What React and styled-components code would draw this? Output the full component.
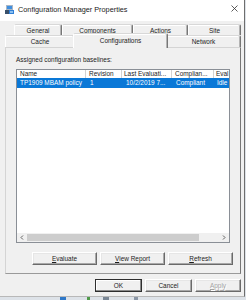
import React from 'react';
import styled, { createGlobalStyle } from 'styled-components';

const Global = createGlobalStyle`
  html, body { margin: 0; padding: 0; }
  body {
    width: 246px;
    height: 300px;
    overflow: hidden;
    background: #dde2e8;
    font-family: "Liberation Sans", Arial, sans-serif;
  }
`;

const Window = styled.div`
  box-sizing: border-box;
  width: 245px;
  height: 297px;
  background: #f0f0f0;
  border-right: 1px solid #6e6e6e;
  border-bottom: 1px solid #b8b8b8;
  display: flex;
  flex-direction: column;
  font-family: "Liberation Sans", Arial, sans-serif;
  font-size: 6.45px;
  color: #1c1c1c;
`;

const TitleBar = styled.div`
  flex: none;
  height: 21px;
  box-sizing: border-box;
  padding: 0 6px 4px 5px;
  background: #ffffff;
  display: flex;
  align-items: center;
`;

const Title = styled.div`
  margin-left: 4px;
  margin-top: 2px;
  font-size: 7.3px;
  color: #1a1a1a;
  white-space: nowrap;
`;

const CloseBox = styled.div`
  margin-left: auto;
  display: flex;
`;

const Body = styled.div`
  flex: none;
  padding: 3px 3px 0 5px;
  display: flex;
  flex-direction: column;
`;

const TabRow = styled.div`
  display: flex;
  height: ${p => p.h}px;
  padding-left: ${p => p.indent}px;
`;

const Tab = styled.div`
  box-sizing: border-box;
  flex: none;
  width: ${p => (p.active ? p.w + 4 : p.w)}px;
  height: ${p => (p.active ? p.h + 3 : p.h)}px;
  margin: ${p => (p.active ? '-2px -2px -1px -2px' : '0')};
  position: ${p => (p.active ? 'relative' : 'static')};
  z-index: ${p => (p.active ? 1 : 'auto')};
  display: flex;
  align-items: center;
  justify-content: center;
  padding-bottom: ${p => (p.active ? 1 : 0)}px;
  background: #f0f0f0;
  border-top: 1px solid #d8d8d8;
  border-left: 1px solid #ffffff;
  border-right: 1px solid #777777;
  border-top-left-radius: 2px;
  border-top-right-radius: 2px;
  box-shadow: inset -1px 0 #b4b4b4, inset 0 1px #ffffff;
  white-space: nowrap;
  color: #1c1c1c;
`;

const Panel = styled.div`
  box-sizing: border-box;
  height: 227px;
  background: #f0f0f0;
  border: 1px solid;
  border-color: #d4d4d4 #777777 #9a9a9a #d4d4d4;
  padding: 7px 10px 8px 10px;
  display: flex;
  flex-direction: column;
`;

const Label = styled.div`
  height: 9px;
  line-height: 9px;
  white-space: nowrap;
`;

const List = styled.div`
  margin-top: 5px;
  height: 174px;
  box-sizing: border-box;
  border: 1px solid #8a8f96;
  background: #ffffff;
  display: flex;
  flex-direction: column;
  overflow: hidden;
`;

const HeaderRow = styled.div`
  flex: none;
  display: flex;
  height: 8px;
`;

const HeaderCell = styled.div`
  box-sizing: border-box;
  flex: none;
  width: ${p => p.w}px;
  padding-left: ${p => p.pad}px;
  line-height: 8px;
  border-right: 1px solid #d2d2d2;
  white-space: nowrap;
  overflow: hidden;
  color: #1c1c1c;
`;

const DataRow = styled.div`
  flex: none;
  display: flex;
  height: 10px;
  background: ${p => (p.selected ? '#0a78d7' : 'transparent')};
  color: ${p => (p.selected ? '#ffffff' : '#1c1c1c')};
`;

const DataCell = styled.div`
  box-sizing: border-box;
  flex: none;
  width: ${p => p.w}px;
  padding-left: ${p => p.pad}px;
  line-height: 10px;
  white-space: nowrap;
  overflow: hidden;
`;

const Rows = styled.div`
  flex: 1;
`;

const HScroll = styled.div`
  flex: none;
  height: 9px;
  display: flex;
  align-items: stretch;
  background: #f0f0f0;
`;

const ScrollArrow = styled.div`
  flex: none;
  width: 10px;
  display: flex;
  align-items: center;
  justify-content: center;
`;

const ScrollTrack = styled.div`
  flex: 1;
  display: flex;
  align-items: stretch;
  padding: 1px 0;
`;

const Thumb = styled.div`
  width: 172px;
  background: #cdcdcd;
`;

const ButtonRow = styled.div`
  display: flex;
  justify-content: flex-end;
  gap: 3px;
  margin: ${p => p.m};
`;

const Button = styled.button`
  box-sizing: border-box;
  flex: none;
  width: ${p => p.w}px;
  height: 13px;
  padding: 0 0 1px 0;
  margin: 0;
  font-family: "Liberation Sans", Arial, sans-serif;
  font-size: 6.45px;
  color: ${p => (p.disabled ? '#a3a3a3' : '#1c1c1c')};
  text-shadow: ${p => (p.disabled ? '1px 1px 0 #ffffff' : 'none')};
  background: #f0f0f0;
  border: 1px solid;
  border-color: ${p => (p.primary ? '#2e2e2e' : '#ffffff #6a6a6a #6a6a6a #ffffff')};
  box-shadow: ${p =>
    p.primary
      ? 'inset -1px -1px #8a8a8a, inset 1px 1px #ffffff'
      : 'inset -1px -1px #a8a8a8, inset 1px 1px #e6e6e6'};
  white-space: nowrap;
  cursor: default;

  u { text-decoration-thickness: 0.5px; text-underline-offset: 1px; }
`;

const Desktop = styled.div`
  height: 3px;
  display: flex;
  align-items: stretch;
  background: #dde2e8;
`;

const Spot = styled.div`
  flex: none;
  width: ${p => p.w}px;
  margin-left: ${p => p.ml}px;
  background: ${p => p.c};
`;

const AppIcon = () => (
  <svg width="9" height="9" viewBox="0 0 9 9" style={{ marginTop: 2 }}>
    <rect x="1" y="0" width="7" height="5" fill="#aab6c4" />
    <rect x="2" y="1" width="5" height="3" fill="#3f8fe0" />
    <rect x="0" y="5" width="4" height="4" fill="#39506a" />
    <rect x="4" y="5" width="5" height="4" fill="#2f7fd6" />
    <rect x="5" y="6" width="3" height="2" fill="#8cc0f0" />
  </svg>
);

const CloseIcon = () => (
  <svg width="7" height="7" viewBox="0 0 7 7">
    <path d="M0.5 0.5 L6.5 6.5 M6.5 0.5 L0.5 6.5" stroke="#333" strokeWidth="0.8" fill="none" />
  </svg>
);

const Chevron = ({ dir }) => (
  <svg width="4" height="5" viewBox="0 0 4 5">
    {dir === 'left' ? (
      <path d="M3 0.5 L1 2.5 L3 4.5" stroke="#606060" strokeWidth="1" fill="none" />
    ) : (
      <path d="M1 0.5 L3 2.5 L1 4.5" stroke="#606060" strokeWidth="1" fill="none" />
    )}
  </svg>
);

const backTabs = [
  { label: 'General', w: 48 },
  { label: 'Components', w: 71 },
  { label: 'Actions', w: 55 },
  { label: 'Site', w: 53 },
];

const frontTabs = [
  { label: 'Cache', w: 70 },
  { label: 'Configurations', w: 91, active: true },
  { label: 'Network', w: 75 },
];

const columns = [
  { title: 'Name', w: 69 },
  { title: 'Revision', w: 36 },
  { title: 'Last Evaluati...', w: 50 },
  { title: 'Complian...', w: 42 },
  { title: 'Evaluation State', w: 60 },
];

const rows = [
  ['TP1909 MBAM policy', '1', '10/2/2019 7...', 'Compliant', 'Idle'],
];

export default function App() {
  return (
    <>
      <Global />
      <Window>
        <TitleBar>
          <AppIcon />
          <Title>Configuration Manager Properties</Title>
          <CloseBox>
            <CloseIcon />
          </CloseBox>
        </TitleBar>
        <Body>
          <TabRow h={11} indent={9}>
            {backTabs.map(t => (
              <Tab key={t.label} w={t.w} h={11}>{t.label}</Tab>
            ))}
          </TabRow>
          <TabRow h={12} indent={0}>
            {frontTabs.map(t => (
              <Tab key={t.label} w={t.w} h={12} active={t.active}>{t.label}</Tab>
            ))}
          </TabRow>
          <Panel>
            <Label>Assigned configuration baselines:</Label>
            <List>
              <HeaderRow>
                {columns.map((c, i) => (
                  <HeaderCell key={c.title} w={c.w} pad={i === 2 || i === 4 ? 2 : 3}>
                    {i === 4 ? 'Eval' : c.title}
                  </HeaderCell>
                ))}
              </HeaderRow>
              <Rows>
                {rows.map((r, ri) => (
                  <DataRow key={ri} selected>
                    {r.map((v, i) => (
                      <DataCell key={i} w={columns[i].w} pad={i === 0 ? 3 : i === 4 ? 3 : 4}>{v}</DataCell>
                    ))}
                  </DataRow>
                ))}
              </Rows>
              <HScroll>
                <ScrollArrow><Chevron dir="left" /></ScrollArrow>
                <ScrollTrack><Thumb /></ScrollTrack>
                <ScrollArrow><Chevron dir="right" /></ScrollArrow>
              </HScroll>
            </List>
            <ButtonRow m="9px -3px 0 0">
              <Button w={65}><u>E</u>valuate</Button>
              <Button w={65}><u>V</u>iew Report</Button>
              <Button w={65}><u>R</u>efresh</Button>
            </ButtonRow>
          </Panel>
        </Body>
        <ButtonRow m="5px 3px 0 0">
          <Button w={47} primary>OK</Button>
          <Button w={47}>Cancel</Button>
          <Button w={46} disabled><u>A</u>pply</Button>
        </ButtonRow>
      </Window>
      <Desktop>
        <Spot w={6} ml={60} c="#2f78c8" />
        <Spot w={3} ml={21} c="#4f9a4a" />
        <Spot w={6} ml={13} c="#7a8796" />
        <Spot w={4} ml={25} c="#8a96a6" />
      </Desktop>
    </>
  );
}
